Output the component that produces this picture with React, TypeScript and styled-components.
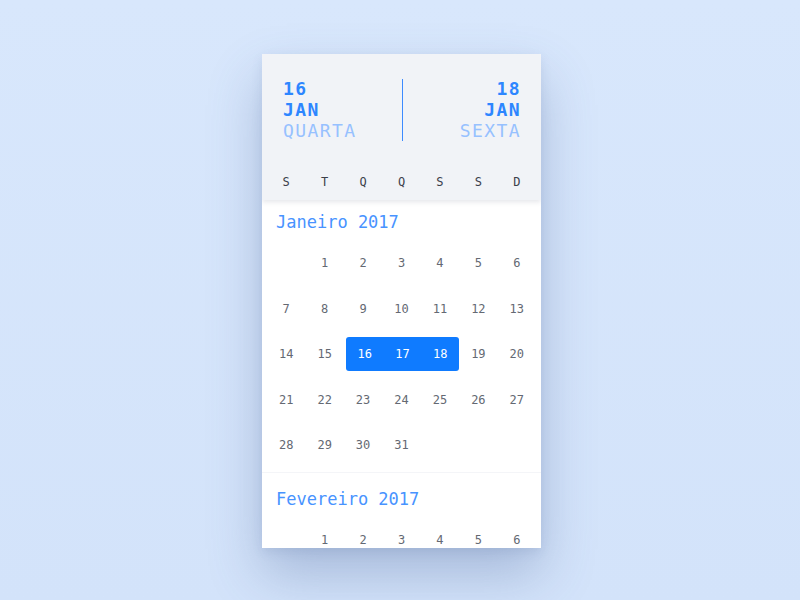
import styled, { createGlobalStyle } from "styled-components";

const GlobalStyle = createGlobalStyle`
  html, body {
    margin: 0;
    padding: 0;
    background: #d6e6fb;
  }
  body {
    font-family: "DejaVu Sans Mono", "Liberation Mono", monospace;
  }
`;

type Month = {
  title: string;
  offset: number;
  days: number;
  shownDays?: number;
  range?: [number, number];
};

const MONTHS: Month[] = [
  { title: "Janeiro 2017", offset: 1, days: 31, range: [16, 18] },
  { title: "Fevereiro 2017", offset: 1, days: 28, shownDays: 6 },
];

const WEEKDAYS = ["S", "T", "Q", "Q", "S", "S", "D"];

function buildWeeks(offset: number, days: number) {
  const cells: (number | null)[] = [];
  for (let i = 0; i < offset; i++) cells.push(null);
  for (let d = 1; d <= days; d++) cells.push(d);
  const weeks: (number | null)[][] = [];
  for (let i = 0; i < cells.length; i += 7) weeks.push(cells.slice(i, i + 7));
  return weeks;
}

function MonthBlock({ month }: { month: Month }) {
  const weeks = buildWeeks(month.offset, month.shownDays ?? month.days);
  const range = month.range;

  return (
    <MonthSection>
      <MonthTitle>{month.title}</MonthTitle>
      {weeks.map((week, wi) => {
        const inRange = range
          ? week.filter((d) => d !== null && d >= range[0] && d <= range[1])
          : [];
        const start = inRange.length ? week.indexOf(inRange[0]) : -1;
        return (
          <WeekRow key={wi}>
            {week.map((d, i) => {
              if (start >= 0 && i === start) {
                return (
                  <Range key={i} $span={inRange.length}>
                    {inRange.map((r) => (
                      <Day key={r} $selected>
                        {r}
                      </Day>
                    ))}
                  </Range>
                );
              }
              if (start >= 0 && i > start && i < start + inRange.length) return null;
              return <Day key={i}>{d ?? ""}</Day>;
            })}
          </WeekRow>
        );
      })}
    </MonthSection>
  );
}

export default function App() {
  return (
    <Page>
      <GlobalStyle />
      <Card>
        <Header>
          <Dates>
            <DateBlock>
              <DateNum>16</DateNum>
              <DateNum>JAN</DateNum>
              <DateWeekday>QUARTA</DateWeekday>
            </DateBlock>
            <Divider />
            <DateBlock $right>
              <DateNum>18</DateNum>
              <DateNum>JAN</DateNum>
              <DateWeekday>SEXTA</DateWeekday>
            </DateBlock>
          </Dates>
          <WeekdayRow>
            {WEEKDAYS.map((w, i) => (
              <Weekday key={i}>{w}</Weekday>
            ))}
          </WeekdayRow>
        </Header>
        <List>
          {MONTHS.map((m) => (
            <MonthBlock key={m.title} month={m} />
          ))}
        </List>
      </Card>
    </Page>
  );
}

const Page = styled.div`
  width: 800px;
  height: 600px;
  box-sizing: border-box;
  padding: 54px 0 0 262px;
  background: linear-gradient(180deg, #d8e7fc 0%, #d3e3fa 100%);
  overflow: hidden;
`;

const Card = styled.div`
  width: 279px;
  height: 494px;
  background: #ffffff;
  overflow: hidden;
  display: flex;
  flex-direction: column;
  box-shadow: 0 26px 50px rgba(70, 95, 150, 0.32), 0 4px 10px rgba(70, 95, 150, 0.12);
`;

const Header = styled.div`
  position: relative;
  z-index: 1;
  flex-shrink: 0;
  height: 146px;
  background: #f1f3f7;
  display: flex;
  flex-direction: column;
  box-shadow: 0 2px 5px rgba(40, 50, 80, 0.12);
`;

const Dates = styled.div`
  display: grid;
  grid-template-columns: 1fr 1px 1fr;
  align-items: center;
  padding: 24px 20px 0 21px;
  height: 87px;
  box-sizing: border-box;
`;

const DateBlock = styled.div<{ $right?: boolean }>`
  display: flex;
  flex-direction: column;
  align-items: ${(p) => (p.$right ? "flex-end" : "flex-start")};
  align-self: start;
`;

const DateNum = styled.div`
  font-size: 18px;
  line-height: 21px;
  letter-spacing: 1.4px;
  font-weight: 700;
  color: #2d86ff;
`;

const DateWeekday = styled.div`
  font-size: 18px;
  line-height: 21px;
  letter-spacing: 1.4px;
  font-weight: 400;
  color: #97c1ff;
`;

const Divider = styled.div`
  width: 1px;
  height: 62px;
  align-self: start;
  margin-top: 1px;
  background: #3d8bff;
`;

const WeekdayRow = styled.div`
  display: grid;
  grid-template-columns: repeat(7, 1fr);
  padding: 0 5px;
  margin-top: auto;
  height: 36px;
  align-items: center;
`;

const Weekday = styled.div`
  text-align: center;
  font-size: 12px;
  color: #3b404b;
`;

const List = styled.div`
  margin-top: -4px;
  flex: 1;
`;

const MonthSection = styled.div`
  padding: 0 5px 4px;
  border-bottom: 1px solid #f4f5f8;
`;

const MonthTitle = styled.div`
  height: 44px;
  box-sizing: border-box;
  padding: 12px 0 0 9px;
  line-height: 28px;
  font-size: 17px;
  color: #4893ff;
`;

const WeekRow = styled.div`
  display: grid;
  grid-template-columns: repeat(7, 1fr);
  height: 45.5px;
  align-items: center;
`;

const Range = styled.div<{ $span: number }>`
  grid-column: span ${(p) => p.$span};
  display: grid;
  grid-template-columns: repeat(${(p) => p.$span}, 1fr);
  align-items: center;
  height: 34px;
  margin-left: 2px;
  border-radius: 3px;
  background: #0f7bff;
`;

const Day = styled.div<{ $selected?: boolean }>`
  text-align: center;
  font-size: 12px;
  padding-top: 1px;
  color: ${(p) => (p.$selected ? "#ffffff" : "#646973")};
`;
